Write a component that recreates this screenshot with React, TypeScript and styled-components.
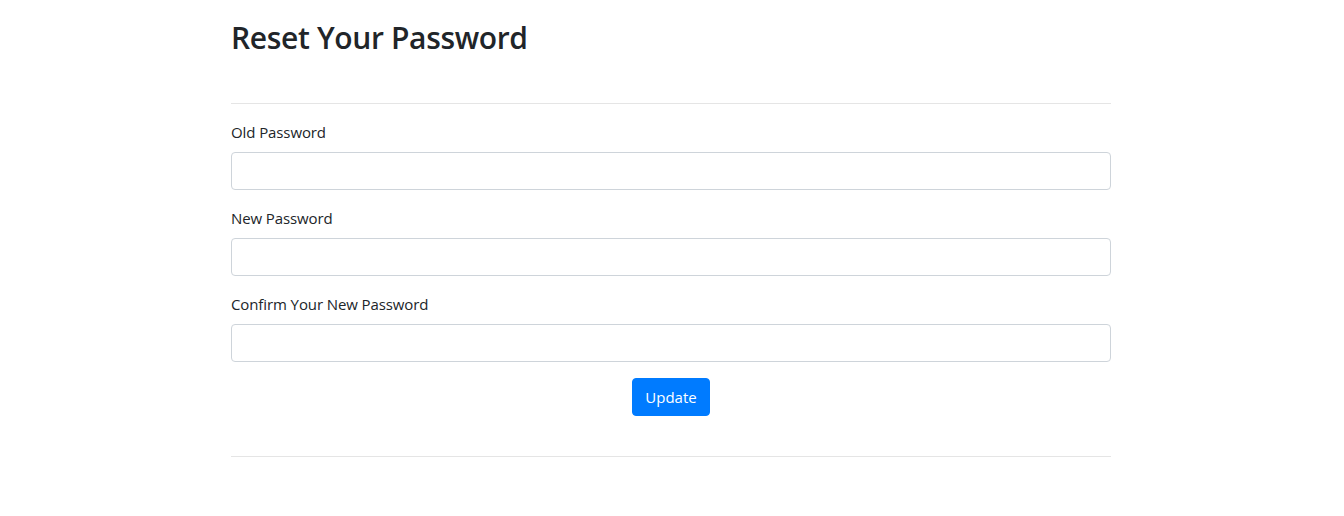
import React from 'react';
import styled, { createGlobalStyle } from 'styled-components';

const GlobalStyle = createGlobalStyle`
  body {
    margin: 0;
    background: #fff;
    color: #212529;
    font-family: "Open Sans", "Noto Sans", Arial, sans-serif;
    font-size: 16px;
    line-height: 1.5;
  }
  * {
    box-sizing: border-box;
  }
`;

const Container = styled.div`
  width: 880px;
  margin-left: calc(50% - 441px);
  padding-top: 19px;
`;

const Title = styled.h2`
  margin: 0;
  font-size: 30px;
  font-weight: 600;
  line-height: 38px;
  letter-spacing: -0.35px;
`;

const Divider = styled.hr<{ $top: number }>`
  margin: ${(p) => p.$top}px 0 0;
  border: 0;
  border-top: 1px solid rgba(0, 0, 0, 0.1);
`;

const Form = styled.form`
  display: flex;
  flex-direction: column;
  padding-top: 16px;
`;

const Group = styled.div`
  display: flex;
  flex-direction: column;
  margin-bottom: 16px;
`;

const Label = styled.label`
  font-size: 15px;
  line-height: 24px;
  margin-bottom: 8px;
  letter-spacing: -0.1px;
`;

const Input = styled.input`
  height: 38px;
  padding: 6px 12px;
  font-size: 16px;
  border: 1px solid #ced4da;
  border-radius: 4px;
  background: #fff;
  color: #495057;
`;

const Actions = styled.div`
  display: flex;
  justify-content: center;
`;

const Button = styled.button`
  height: 38px;
  padding: 0 12px;
  background: #007bff;
  border: 1px solid #007bff;
  border-radius: 4px;
  color: #fff;
  font-family: inherit;
  font-size: 15px;
  cursor: pointer;
`;

const fields = ['Old Password', 'New Password', 'Confirm Your New Password'];

export default function App() {
  return (
    <>
      <GlobalStyle />
      <Container>
        <Title>Reset Your Password</Title>
        <Divider $top={46} />
        <Form onSubmit={(e) => e.preventDefault()}>
          {fields.map((f) => (
            <Group key={f}>
              <Label>{f}</Label>
              <Input type="password" />
            </Group>
          ))}
          <Actions>
            <Button type="submit">Update</Button>
          </Actions>
        </Form>
        <Divider $top={40} />
      </Container>
    </>
  );
}
